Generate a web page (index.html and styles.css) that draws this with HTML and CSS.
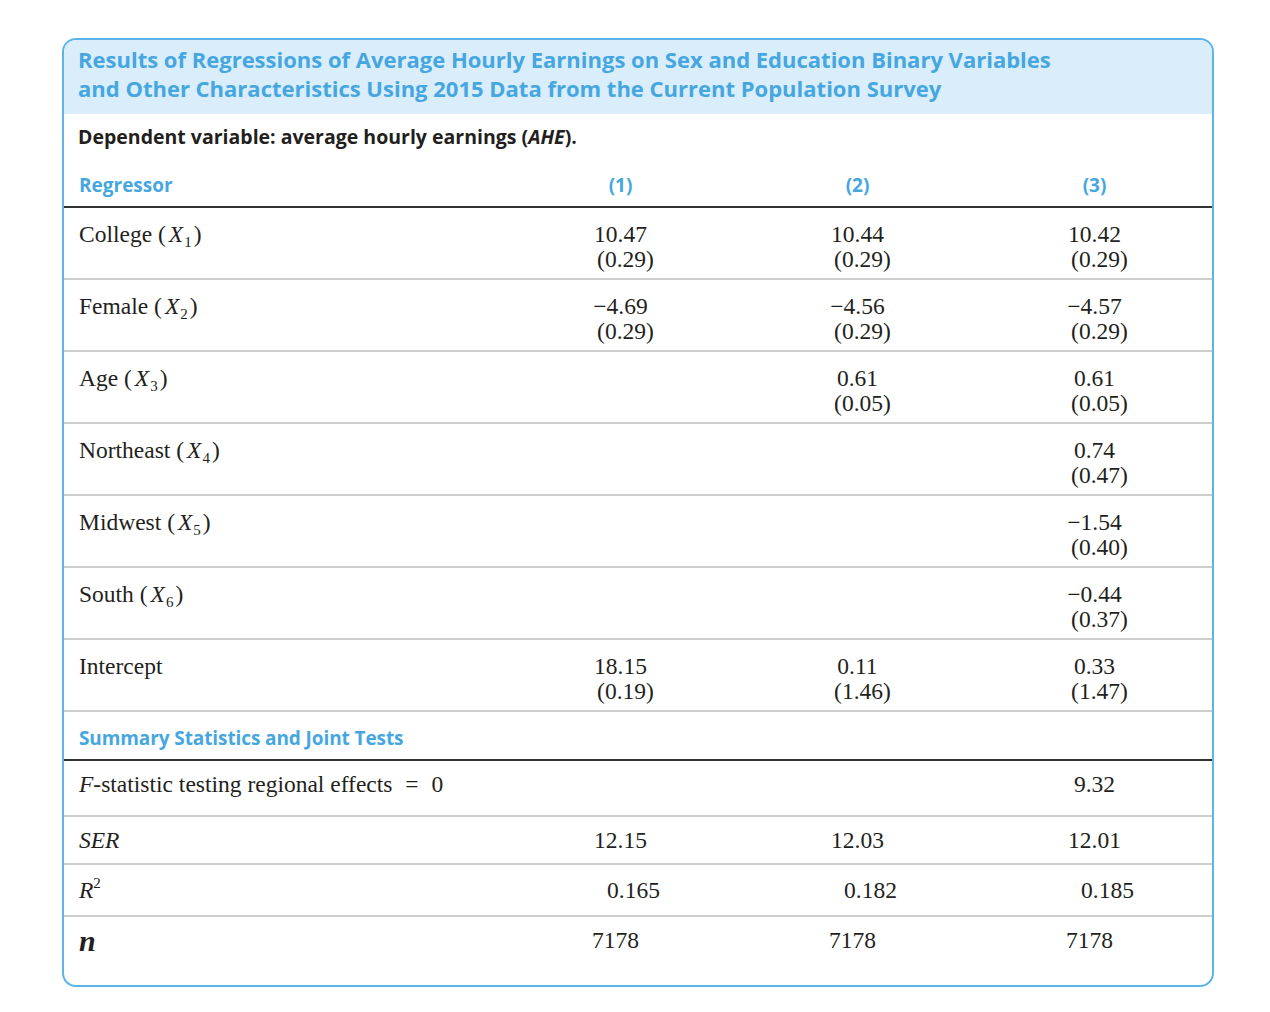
FILE: index.html
```html
<!DOCTYPE html>
<html>
<head>
<meta charset="utf-8">
<link rel="stylesheet" href="styles.css">
</head>
<body>
<div class="card">
  <div class="title">Results of Regressions of Average Hourly Earnings on Sex and Education Binary Variables<br>and Other Characteristics Using 2015 Data from the Current Population Survey</div>
  <div class="dep">Dependent variable: average hourly earnings (<i>AHE</i>).</div>
  <table class="reg">
    <colgroup><col class="c-label"><col class="c-val"><col class="c-val"><col class="c-val"></colgroup>
    <thead>
      <tr class="head"><th class="lab">Regressor</th><th>(1)</th><th>(2)</th><th>(3)</th></tr>
    </thead>
    <tbody>
      <tr class="row"><td class="lab">College (<i>X</i><sub>1</sub>)</td>
        <td><div class="v">10.47</div><div class="se">(0.29)</div></td>
        <td><div class="v">10.44</div><div class="se">(0.29)</div></td>
        <td><div class="v">10.42</div><div class="se">(0.29)</div></td></tr>
      <tr class="row"><td class="lab">Female (<i>X</i><sub>2</sub>)</td>
        <td><div class="v">−4.69</div><div class="se">(0.29)</div></td>
        <td><div class="v">−4.56</div><div class="se">(0.29)</div></td>
        <td><div class="v">−4.57</div><div class="se">(0.29)</div></td></tr>
      <tr class="row"><td class="lab">Age (<i>X</i><sub>3</sub>)</td>
        <td></td>
        <td><div class="v">0.61</div><div class="se">(0.05)</div></td>
        <td><div class="v">0.61</div><div class="se">(0.05)</div></td></tr>
      <tr class="row"><td class="lab">Northeast (<i>X</i><sub>4</sub>)</td>
        <td></td><td></td>
        <td><div class="v">0.74</div><div class="se">(0.47)</div></td></tr>
      <tr class="row"><td class="lab">Midwest (<i>X</i><sub>5</sub>)</td>
        <td></td><td></td>
        <td><div class="v">−1.54</div><div class="se">(0.40)</div></td></tr>
      <tr class="row"><td class="lab">South (<i>X</i><sub>6</sub>)</td>
        <td></td><td></td>
        <td><div class="v">−0.44</div><div class="se">(0.37)</div></td></tr>
      <tr class="row"><td class="lab">Intercept</td>
        <td><div class="v">18.15</div><div class="se">(0.19)</div></td>
        <td><div class="v">0.11</div><div class="se">(1.46)</div></td>
        <td><div class="v">0.33</div><div class="se">(1.47)</div></td></tr>
      <tr class="sumhead"><th class="lab" colspan="4">Summary Statistics and Joint Tests</th></tr>
      <tr class="stat fstat"><td class="lab"><i>F</i>-statistic testing regional effects <span class="eq">=</span> 0</td>
        <td></td><td></td><td>9.32</td></tr>
      <tr class="stat ser"><td class="lab"><i>SER</i></td>
        <td>12.15</td><td>12.03</td><td>12.01</td></tr>
      <tr class="stat r2"><td class="lab"><i>R</i><sup>2</sup></td>
        <td>0.165</td><td>0.182</td><td>0.185</td></tr>
      <tr class="stat nrow"><td class="lab"><i class="n">n</i></td>
        <td>7178</td><td>7178</td><td>7178</td></tr>
    </tbody>
  </table>
</div>
</body>
</html>
```
FILE: styles.css
```css
html, body { margin: 0; padding: 0; background: #ffffff; }
body { padding: 38px 0 0 62px; }

.card {
  width: 1148px;
  border: 2px solid #5bb5e8;
  border-radius: 14px;
  overflow: hidden;
  background: #fff;
}

.title {
  background: #d9edfa;
  color: #46a7e0;
  font-family: "Open Sans", Lato, sans-serif;
  font-weight: 700;
  font-size: 22px;
  line-height: 29px;
  padding: 5px 14px 11px;
  letter-spacing: 0;
}

.dep {
  font-family: "Open Sans", Lato, sans-serif;
  font-weight: 700;
  font-size: 19.5px;
  line-height: 24px;
  color: #231f20;
  padding: 11px 14px 0;
}
.dep i { font-style: italic; }

.reg {
  width: 100%;
  border-collapse: collapse;
  table-layout: fixed;
}
.c-label { width: 438px; }
.c-val { width: 237px; }

.reg th, .reg td { padding: 0; vertical-align: top; }

.head th {
  font-family: "Open Sans", Lato, sans-serif;
  font-weight: 700;
  font-size: 19px;
  line-height: 24px;
  color: #46a7e0;
  text-align: center;
  padding: 24px 0 9px;
  border-bottom: 2px solid #333;
}
.head th.lab { text-align: left; }

.lab { text-align: left; padding-left: 15px !important; }

.row td {
  font-family: "Liberation Serif", serif;
  font-size: 23.5px;
  line-height: 25px;
  color: #231f20;
  text-align: center;
  padding: 14px 0 6px;
  border-bottom: 2px solid #cdcdcd;
}
.row td.lab { text-align: left; }
.se { padding-left: 10px; }

.lab i { margin: 0 1px 0 3px; }
sub { font-size: 15px; vertical-align: -5px; line-height: 0; margin-right: 2px; }
sup { font-size: 15px; vertical-align: 10px; line-height: 0; }

.sumhead th {
  font-family: "Open Sans", Lato, sans-serif;
  font-weight: 700;
  font-size: 19px;
  line-height: 24px;
  color: #46a7e0;
  text-align: left;
  padding: 14px 0 9px;
  border-bottom: 2px solid #333;
  letter-spacing: -0.1px;
}

.stat td {
  font-family: "Liberation Serif", serif;
  font-size: 23.5px;
  line-height: 25px;
  color: #231f20;
  text-align: center;
  border-bottom: 2px solid #cdcdcd;
}
.stat td.lab { text-align: left; }
.stat .lab i { margin: 0; }
.eq { margin: 0 7px; }
.fstat td { padding: 11px 0 18px; }
.ser td { padding: 11px 0 10px; }
.r2 td { padding: 13px 0 12px; }
.r2 td:not(.lab) { padding-left: 26px; }
.nrow td { padding: 11px 0 29px; border-bottom: none; }
.nrow td:not(.lab) { padding-right: 10px; }
.n { font-size: 30px; font-weight: 700; }
```
